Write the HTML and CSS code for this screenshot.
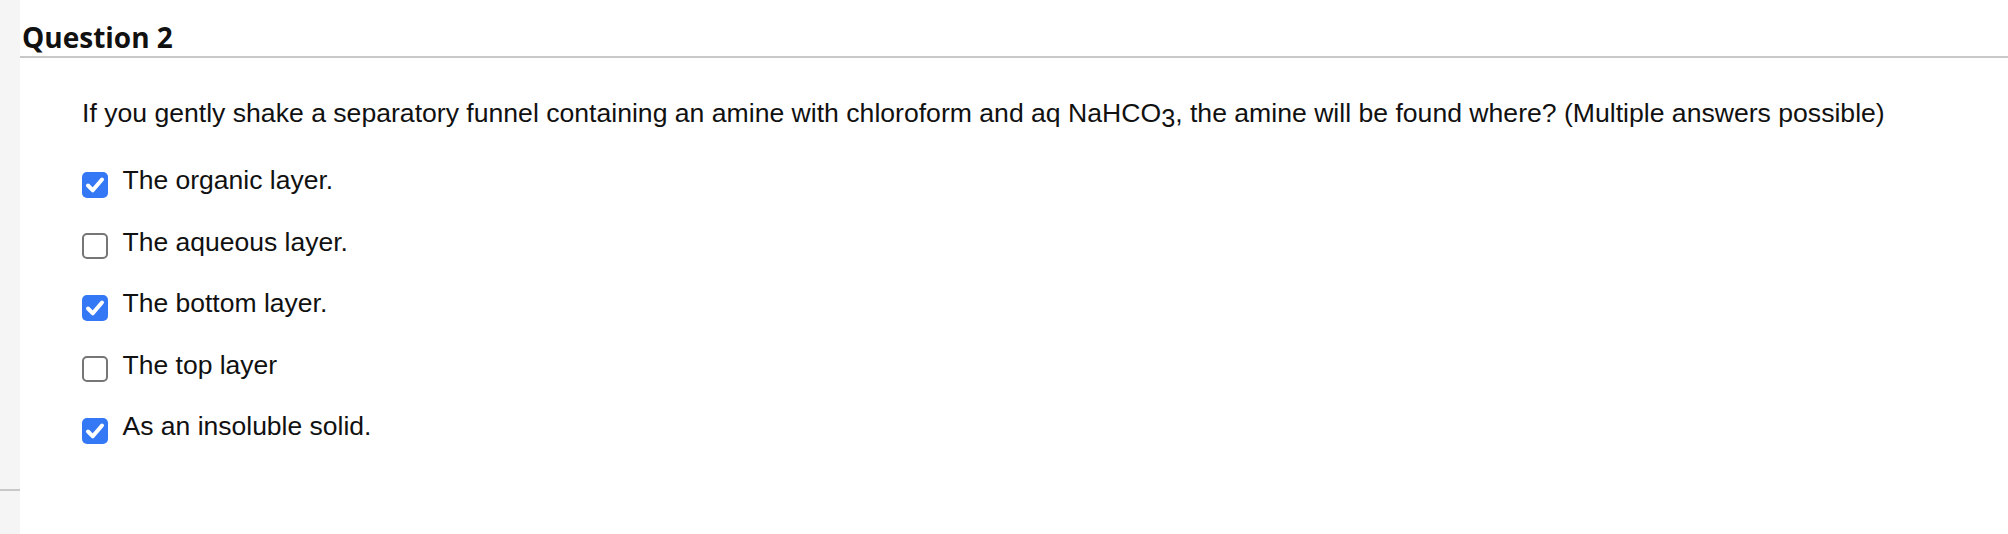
FILE: index.html
```html
<!DOCTYPE html>
<html>
<head>
<meta charset="utf-8">
<link rel="stylesheet" href="styles.css">
</head>
<body>
<div class="page">
  <div class="rail"><div class="rail-top"></div></div>
  <div class="main">
    <div class="header">Question 2</div>
    <div class="content">
      <p class="question">If you gently shake a separatory funnel containing an amine with chloroform and aq NaHCO<span class="sub">3</span>, the amine will be found where? (Multiple answers possible)</p>
      <div class="options">
        <div class="option">
          <span class="box checked"><svg viewBox="0 0 26 26" width="26" height="26"><path d="M6 13.5 L10.8 18.3 L20 7.5" fill="none" stroke="#fff" stroke-width="4" stroke-linecap="round" stroke-linejoin="round"/></svg></span>
          <span class="label">The organic layer.</span>
        </div>
        <div class="option">
          <span class="box"></span>
          <span class="label">The aqueous layer.</span>
        </div>
        <div class="option">
          <span class="box checked"><svg viewBox="0 0 26 26" width="26" height="26"><path d="M6 13.5 L10.8 18.3 L20 7.5" fill="none" stroke="#fff" stroke-width="4" stroke-linecap="round" stroke-linejoin="round"/></svg></span>
          <span class="label">The bottom layer.</span>
        </div>
        <div class="option">
          <span class="box"></span>
          <span class="label">The top layer</span>
        </div>
        <div class="option">
          <span class="box checked"><svg viewBox="0 0 26 26" width="26" height="26"><path d="M6 13.5 L10.8 18.3 L20 7.5" fill="none" stroke="#fff" stroke-width="4" stroke-linecap="round" stroke-linejoin="round"/></svg></span>
          <span class="label">As an insoluble solid.</span>
        </div>
      </div>
    </div>
  </div>
</div>
</body>
</html>
```
FILE: styles.css
```css
html, body {
  margin: 0;
  padding: 0;
  background: #fff;
}
.page {
  display: flex;
  width: 2008px;
  height: 534px;
  overflow: hidden;
}
.rail {
  width: 20px;
  flex: none;
  background: #f5f5f5;
}
.rail-top {
  height: 489px;
  border-bottom: 2px solid #c8c8c8;
}
.main {
  flex: 1;
}
.header {
  font-family: "Open Sans", sans-serif;
  font-weight: 700;
  font-size: 28px;
  line-height: 34px;
  color: #111;
  padding: 20px 0 2px 2px;
  border-bottom: 2px solid #c8c8c8;
}
.content {
  padding-left: 62px;
  font-family: "Liberation Sans", Arial, sans-serif;
  color: #111;
}
.question {
  margin: 38.8px 0 0 0;
  font-size: 26.6px;
  line-height: 32px;
  height: 32px;
  white-space: nowrap;
}
.sub {
  font-size: 0.95em;
  position: relative;
  top: 0.22em;
}
.options {
  margin-top: 36.2px;
  display: flex;
  flex-direction: column;
  gap: 31.6px;
}
.option {
  display: flex;
  align-items: flex-start;
  height: 30px;
  font-size: 26.5px;
  line-height: 30px;
}
.box {
  width: 26px;
  height: 26px;
  box-sizing: border-box;
  border: 2px solid #767676;
  border-radius: 5px;
  margin-top: 6.6px;
  margin-right: 14.5px;
  flex: none;
  position: relative;
}
.box.checked {
  border: none;
  background: #3478f6;
}
.box svg {
  display: block;
}
```
